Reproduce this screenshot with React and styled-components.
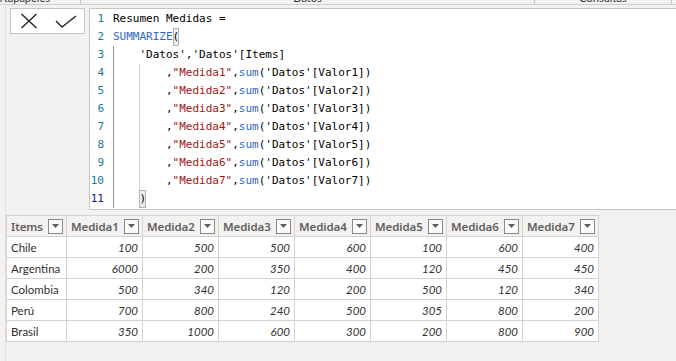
import React from 'react';
import styled, { createGlobalStyle } from 'styled-components';

const GlobalStyle = createGlobalStyle`
    html, body {
        margin: 0;
        padding: 0;
        background-color: #f3f2f1;
    }
    * {
        box-sizing: border-box;
    }
`;

const Page = styled.div`
    width: 676px;
    height: 361px;
    overflow: hidden;
    background-color: #f3f2f1;
    font-family: "Segoe UI", Lato, "Noto Sans", sans-serif;
    display: flex;
    flex-direction: column;
`;

const Ribbon = styled.div`
    height: 5px;
    flex-shrink: 0;
    display: flex;
    overflow: hidden;
    border-bottom: 1px solid #d2d0ce;
`;

const RibbonGroup = styled.div`
    width: ${(p) => p.$width}px;
    flex-shrink: 0;
    display: flex;
    justify-content: ${(p) => p.$align || 'center'};
    padding-right: ${(p) => p.$padRight || 0}px;
    border-right: 1px solid #c8c6c4;
    height: 4px;
    overflow: hidden;
`;

const RibbonLabel = styled.span`
    font-size: 11px;
    line-height: 11px;
    margin-top: -8px;
    color: #323130;
    white-space: nowrap;
`;

const Body = styled.div`
    flex: 1;
    display: flex;
`;

const LeftRail = styled.div`
    width: 6px;
    flex-shrink: 0;
    border-right: 1px solid #e1dfdd;
`;

const Content = styled.div`
    flex: 1;
    display: flex;
    flex-direction: column;
    padding-top: 3px;
`;

const FormulaBar = styled.div`
    display: flex;
    align-items: flex-start;
    gap: 4px;
    padding-left: 4px;
`;

const ActionBox = styled.div`
    width: 75px;
    height: 26px;
    flex-shrink: 0;
    display: flex;
    background-color: #ffffff;
    border: 1px solid #c8c6c4;
`;

const ActionButton = styled.button`
    flex: 1;
    border: none;
    background: transparent;
    padding: 0;
    display: flex;
    align-items: center;
    justify-content: center;
    cursor: pointer;
`;

const Editor = styled.div`
    flex: 1;
    height: 202px;
    background-color: #ffffff;
    border: 1px solid #c8c6c4;
    border-right: none;
    padding: 1px 0;
    font-family: "DejaVu Sans Mono", "Liberation Mono", monospace;
    font-size: 11px;
`;

const Line = styled.div`
    display: flex;
    height: 18px;
    line-height: 18px;
    white-space: pre;
`;

const LineNo = styled.span`
    width: 23px;
    flex-shrink: 0;
    padding-right: 9px;
    text-align: right;
    color: ${(p) => (p.$active ? '#0b216f' : '#237893')};
`;

const Code = styled.span`
    color: #000000;
    display: flex;
`;

const Indent = styled.span`
    display: inline-block;
    width: 4ch;
    height: 18px;
    box-shadow: inset 1px 0 0 ${(p) => (p.$active ? '#939393' : '#d3d3d3')};
`;

const Fn = styled.span`
    color: #2e68c5;
`;

const Str = styled.span`
    color: #a31515;
`;

const Bracket = styled.span`
    background-color: #eceeea;
    box-shadow: inset 0 0 0 1px #b4b4b4;
`;

const Grid = styled.table`
    margin-top: 5px;
    border-collapse: collapse;
    table-layout: fixed;
    width: 592px;
    font-size: 11.5px;
`;

const HeadCell = styled.th`
    width: ${(p) => p.$width}px;
    height: 21px;
    padding: 0 3px 0 4px;
    border: 1px solid #d3d3d3;
    background-color: #f3f2f1;
    font-family: "Noto Sans", sans-serif;
    font-size: 11.5px;
    font-weight: 600;
    letter-spacing: -0.1px;
    color: #605e5c;
    text-align: left;
`;

const HeadInner = styled.div`
    display: flex;
    align-items: center;
    justify-content: space-between;
`;

const FilterBox = styled.span`
    width: 15px;
    height: 15px;
    border: 1px solid #8a8886;
    background-color: #fbfbfb;
    display: flex;
    align-items: center;
    justify-content: center;
`;

const Cell = styled.td`
    height: 21px;
    padding: 0 4px;
    border: 1px solid #d3d3d3;
    background-color: #ffffff;
    color: #323130;
    text-align: ${(p) => (p.$num ? 'right' : 'left')};
    font-style: ${(p) => (p.$num ? 'italic' : 'normal')};
    white-space: nowrap;
`;

const CloseIcon = () => (
    <svg width="18" height="16" viewBox="0 0 18 16">
        <path d="M1.5 1 L16.5 15 M16.5 1 L1.5 15" stroke="#252423" strokeWidth="1.4" fill="none" />
    </svg>
);

const CheckIcon = () => (
    <svg width="22" height="13" viewBox="0 0 22 13">
        <path d="M1 6 L7 12 L21 1" stroke="#252423" strokeWidth="1.4" fill="none" />
    </svg>
);

const FilterIcon = () => (
    <svg width="7" height="4" viewBox="0 0 7 4">
        <path d="M0 0 H7 L3.5 4 Z" fill="#605e5c" />
    </svg>
);

const measures = [1, 2, 3, 4, 5, 6, 7];

const rows = [
    ['Chile', 100, 500, 500, 600, 100, 600, 400],
    ['Argentina', 6000, 200, 350, 400, 120, 450, 450],
    ['Colombia', 500, 340, 120, 200, 500, 120, 340],
    ['Perú', 700, 800, 240, 500, 305, 800, 200],
    ['Brasil', 350, 1000, 600, 300, 200, 800, 900],
];

const App = () => {
    return (
        <Page>
            <GlobalStyle />
            <Ribbon>
                <RibbonGroup $width={81} $align="flex-end" $padRight={30}>
                    <RibbonLabel>Portapapeles</RibbonLabel>
                </RibbonGroup>
                <RibbonGroup $width={454}>
                    <RibbonLabel>Datos</RibbonLabel>
                </RibbonGroup>
                <RibbonGroup $width={137}>
                    <RibbonLabel>Consultas</RibbonLabel>
                </RibbonGroup>
            </Ribbon>
            <Body>
                <LeftRail />
                <Content>
                    <FormulaBar>
                        <ActionBox>
                            <ActionButton aria-label="cancel">
                                <CloseIcon />
                            </ActionButton>
                            <ActionButton aria-label="commit">
                                <CheckIcon />
                            </ActionButton>
                        </ActionBox>
                        <Editor>
                            <Line>
                                <LineNo>1</LineNo>
                                <Code>Resumen Medidas =</Code>
                            </Line>
                            <Line>
                                <LineNo>2</LineNo>
                                <Code>
                                    <Fn>SUMMARIZE</Fn>
                                    <Bracket>(</Bracket>
                                </Code>
                            </Line>
                            <Line>
                                <LineNo>3</LineNo>
                                <Code>
                                    <Indent $active />
                                    'Datos','Datos'[Items]
                                </Code>
                            </Line>
                            {measures.map((n) => (
                                <Line key={n}>
                                    <LineNo>{n + 3}</LineNo>
                                    <Code>
                                        <Indent $active />
                                        <Indent />
                                        ,<Str>"Medida{n}"</Str>,<Fn>sum</Fn>('Datos'[Valor{n}])
                                    </Code>
                                </Line>
                            ))}
                            <Line>
                                <LineNo $active>11</LineNo>
                                <Code>
                                    <Indent $active />
                                    <Bracket>)</Bracket>
                                </Code>
                            </Line>
                        </Editor>
                    </FormulaBar>
                    <Grid>
                        <thead>
                            <tr>
                                <HeadCell $width={60}>
                                    <HeadInner>
                                        Items
                                        <FilterBox><FilterIcon /></FilterBox>
                                    </HeadInner>
                                </HeadCell>
                                {measures.map((n) => (
                                    <HeadCell key={n} $width={76}>
                                        <HeadInner>
                                            Medida{n}
                                            <FilterBox><FilterIcon /></FilterBox>
                                        </HeadInner>
                                    </HeadCell>
                                ))}
                            </tr>
                        </thead>
                        <tbody>
                            {rows.map((row) => (
                                <tr key={row[0]}>
                                    {row.map((value, i) => (
                                        <Cell key={i} $num={i > 0}>{value}</Cell>
                                    ))}
                                </tr>
                            ))}
                        </tbody>
                    </Grid>
                </Content>
            </Body>
        </Page>
    );
};

export default App;
